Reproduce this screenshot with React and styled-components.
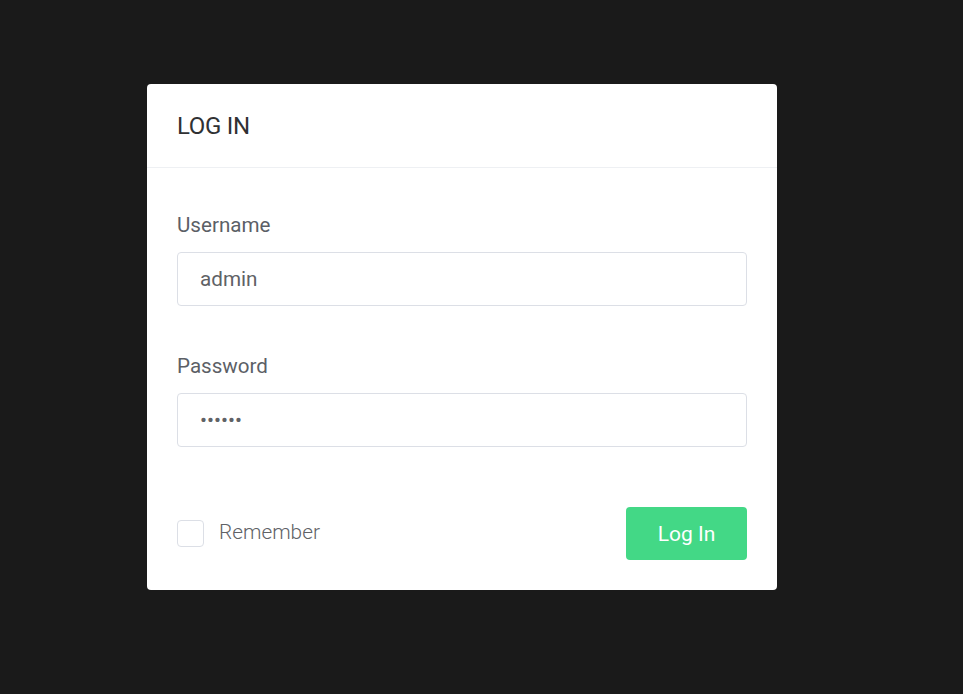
import React from "react";
import styled, { createGlobalStyle } from "styled-components";

const GlobalStyle = createGlobalStyle`
  html, body {
    margin: 0;
    padding: 0;
    background: #1a1a1a;
    font-family: Roboto, "Liberation Sans", sans-serif;
  }
`;

const Page = styled.div`
  min-height: 694px;
  padding: 84px 0 0 147px;
  box-sizing: border-box;
`;

const Card = styled.div`
  width: 630px;
  background: #ffffff;
  border-radius: 4px;
  overflow: hidden;
`;

const CardHeader = styled.div`
  height: 83px;
  display: flex;
  align-items: center;
  padding: 0 30px;
  border-bottom: 1px solid #eef0f3;
  h2 {
    margin: 0;
    font-size: 24px;
    font-weight: 400;
    color: #303133;
    letter-spacing: -0.3px;
  }
`;

const CardBody = styled.form`
  padding: 45px 30px 30px;
`;

const Field = styled.div`
  display: flex;
  flex-direction: column;
  margin-bottom: ${(props) => props.gap || 0}px;
`;

const Label = styled.label`
  font-size: 20.6px;
  line-height: 24px;
  color: #5c5f66;
  margin-bottom: 15px;
`;

const Input = styled.input`
  height: 54px;
  box-sizing: border-box;
  border: 1px solid #dcdfe6;
  border-radius: 4px;
  padding: 0 22px;
  font-family: Roboto, "Liberation Sans", sans-serif;
  font-size: 20.7px;
  color: #606266;
  outline: none;
  background: #fff;
`;

const Footer = styled.div`
  display: flex;
  align-items: center;
  justify-content: space-between;
  margin-top: 60px;
`;

const Check = styled.label`
  display: flex;
  align-items: center;
  gap: 15px;
  font-size: 20.8px;
  line-height: 24px;
  font-weight: 300;
  color: #606266;
  cursor: pointer;
  span.text {
    margin-top: -3px;
  }
`;

const Box = styled.span`
  width: 25px;
  height: 25px;
  border: 1px solid #dcdfe6;
  border-radius: 4px;
  background: #fff;
`;

const Button = styled.button`
  width: 121px;
  height: 53px;
  border: none;
  border-radius: 4px;
  background: #43d886;
  color: #ffffff;
  font-family: Roboto, "Liberation Sans", sans-serif;
  font-size: 21px;
  cursor: pointer;
`;

export default function App() {
  return (
    <Page>
      <GlobalStyle />
      <Card>
        <CardHeader>
          <h2>LOG IN</h2>
        </CardHeader>
        <CardBody onSubmit={(e) => e.preventDefault()}>
          <Field gap={48}>
            <Label>Username</Label>
            <Input type="text" defaultValue="admin" />
          </Field>
          <Field>
            <Label>Password</Label>
            <Input type="password" defaultValue="123456" />
          </Field>
          <Footer>
            <Check>
              <Box />
              <span className="text">Remember</span>
            </Check>
            <Button type="submit">Log In</Button>
          </Footer>
        </CardBody>
      </Card>
    </Page>
  );
}
